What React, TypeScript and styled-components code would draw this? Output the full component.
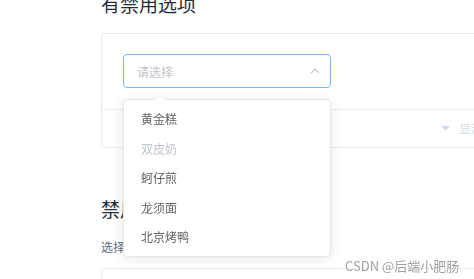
import styled, { createGlobalStyle } from 'styled-components';

const GlobalStyle = createGlobalStyle`
  html, body {
    margin: 0;
    padding: 0;
    background: #ffffff;
    overflow: hidden;
  }

  body {
    font-family: "Noto Sans CJK SC", "Noto Sans", sans-serif;
  }
`;

const options = [
  { value: '1', label: '黄金糕' },
  { value: '2', label: '双皮奶', disabled: true },
  { value: '3', label: '蚵仔煎' },
  { value: '4', label: '龙须面' },
  { value: '5', label: '北京烤鸭' },
];

function App() {
  return (
    <>
      <GlobalStyle />
      <Page>
        <Heading>有禁用选项</Heading>
        <DemoBlock>
          <Source>
            <SelectWrap>
              <SelectBox>
                <Placeholder>请选择</Placeholder>
                <svg width="10" height="6" viewBox="0 0 10 6">
                  <path
                    d="M1 5.2 L5 1.2 L9 5.2"
                    fill="none"
                    stroke="#c0c4cc"
                    strokeWidth="1.2"
                  />
                </svg>
              </SelectBox>
              <Dropdown>
                <Arrow />
                {options.map((opt) => (
                  <Option key={opt.value} $disabled={opt.disabled}>
                    {opt.label}
                  </Option>
                ))}
              </Dropdown>
            </SelectWrap>
          </Source>
          <Control>
            <svg width="9" height="5" viewBox="0 0 9 5">
              <path d="M0 0 L9 0 L4.5 5 Z" fill="#d3dce6" />
            </svg>
            <span>显示代码</span>
          </Control>
        </DemoBlock>

        <SubHeading>禁用状态</SubHeading>
        <Desc>选择器不可用状态</Desc>
        <DemoBlock>
          <Source $empty />
        </DemoBlock>
      </Page>
      <Watermark>CSDN @后端小肥肠</Watermark>
    </>
  );
}

export default App;

const Page = styled.div`
  padding-left: 101px;
  width: 746px;
`;

const Heading = styled.h3`
  margin: -7px 0 18px;
  font-size: 19px;
  line-height: 22px;
  font-weight: 400;
  color: #1f2f3d;
`;

const SubHeading = styled(Heading)`
  margin: 50px 0 17px;
`;

const Desc = styled.p`
  margin: 0 0 11px;
  font-size: 12px;
  line-height: 20px;
  color: #5e6d82;
`;

const DemoBlock = styled.div`
  border: 1px solid #ebebeb;
  border-radius: 3px;
  background: #ffffff;
`;

const Source = styled.div<{ $empty?: boolean }>`
  padding: 20px 21px 21px;
  min-height: ${(p) => (p.$empty ? '34px' : '0')};
`;

const SelectWrap = styled.div`
  position: relative;
  width: 208px;
`;

const SelectBox = styled.div`
  box-sizing: border-box;
  height: 34px;
  border: 1px solid #7fb2f2;
  border-radius: 4px;
  padding: 0 10px 0 13px;
  display: flex;
  align-items: center;
  justify-content: space-between;
`;

const Placeholder = styled.span`
  font-size: 12px;
  color: #c0c4cc;
`;

const Dropdown = styled.div`
  position: absolute;
  top: 45px;
  left: 0;
  z-index: 10;
  box-sizing: border-box;
  width: 208px;
  padding: 4px 0;
  background: #ffffff;
  border: 1px solid #e4e7ed;
  border-radius: 4px;
  box-shadow: 0 2px 12px 0 rgba(0, 0, 0, 0.1);
`;

const Arrow = styled.div`
  position: absolute;
  top: -6px;
  left: 30px;
  width: 0;
  height: 0;
  border-left: 6px solid transparent;
  border-right: 6px solid transparent;
  border-bottom: 6px solid #ebeef5;

  &::after {
    content: '';
    position: absolute;
    top: 1px;
    left: -5px;
    border-left: 5px solid transparent;
    border-right: 5px solid transparent;
    border-bottom: 5px solid #ffffff;
  }
`;

const Option = styled.div<{ $disabled?: boolean }>`
  height: 29.5px;
  line-height: 29.5px;
  padding: 0 17px;
  font-size: 12px;
  color: ${(p) => (p.$disabled ? '#c0c4cc' : '#606266')};
`;

const Control = styled.div`
  height: 37px;
  border-top: 1px solid #eaeefb;
  display: flex;
  align-items: center;
  justify-content: center;
  gap: 9px;
  font-size: 12px;
  color: #d3dce6;
`;

const Watermark = styled.div`
  position: fixed;
  left: 345px;
  top: 256px;
  font-size: 13px;
  line-height: 20px;
  color: #a0a0a0;
  text-shadow: 0 0 2px #ffffff;
  white-space: nowrap;
`;
